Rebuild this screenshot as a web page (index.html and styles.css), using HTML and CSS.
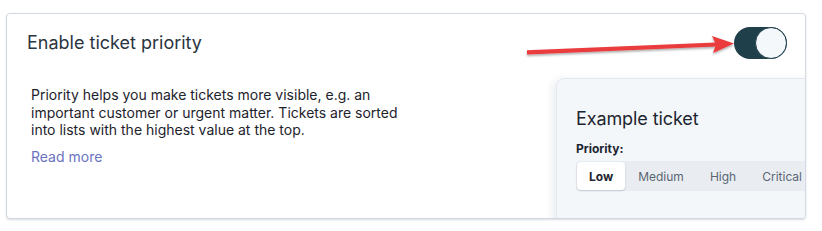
FILE: index.html
```html
<!DOCTYPE html>
<html lang="en">
<head>
<meta charset="utf-8">
<title>Enable ticket priority</title>
<link rel="stylesheet" href="styles.css">
</head>
<body>
<div class="page">
  <section class="card">
    <header class="card-head">
      <h2 class="title">Enable ticket priority</h2>
      <button class="toggle" aria-pressed="true"><span class="knob"></span></button>
    </header>
    <div class="card-body">
      <div class="desc">
        <p>Priority helps you make tickets more visible, e.g. an important customer or urgent matter. Tickets are sorted into lists with the highest value at the top.</p>
        <a class="more" href="#">Read more</a>
      </div>
      <div class="example">
        <h3 class="ex-title">Example ticket</h3>
        <div class="ex-label">Priority:</div>
        <div class="segment">
          <span class="seg active">Low</span>
          <span class="seg">Medium</span>
          <span class="seg">High</span>
          <span class="seg">Critical</span>
        </div>
      </div>
    </div>
  </section>
  <svg class="arrow" width="822" height="231" viewBox="0 0 822 231" aria-hidden="true">
    <defs>
      <filter id="sh" x="-10%" y="-50%" width="120%" height="200%">
        <feDropShadow dx="0" dy="1.5" stdDeviation="0.8" flood-color="#000" flood-opacity="0.35"/>
      </filter>
    </defs>
    <g filter="url(#sh)" fill="#ea3a3d" stroke="none">
      <polygon points="527,50.2 716,42.4 716,46.6 527,54.4"/>
      <polygon points="734,43.6 712,36 716,44.4 713,53"/>
    </g>
  </svg>
</div>
</body>
</html>
```
FILE: styles.css
```css
* { box-sizing: border-box; }
html, body { margin: 0; padding: 0; background: #fff; }
body {
  font-family: Inter, "Noto Sans", "Liberation Sans", sans-serif;
  color: #1d2530;
}
.page {
  position: relative;
  width: 822px;
  height: 231px;
  padding: 13px 16px 0 6px;
}
.card {
  width: 800px;
  height: 206px;
  border: 1px solid #d3d9e2;
  border-radius: 4px;
  box-shadow: 0 1px 2px rgba(40, 60, 90, 0.18);
  overflow: hidden;
  background: #fff;
}
.card-head {
  display: flex;
  align-items: center;
  justify-content: space-between;
  padding: 12px 18px 0 20px;
}
.title {
  margin: 0;
  font-size: 18px;
  font-weight: 400;
  line-height: 32px;
  color: #2b3540;
}
.toggle {
  position: relative;
  width: 53px;
  height: 32px;
  margin-top: 1px;
  padding: 0;
  border: none;
  border-radius: 16px;
  background: #1f3f4a;
  display: flex;
  justify-content: flex-end;
  align-items: center;
}
.knob {
  width: 32px;
  height: 32px;
  border-radius: 50%;
  background: #f5f8fb;
  border: 1.5px solid #1f3f4a;
}
.card-body {
  display: flex;
  align-items: flex-start;
  margin-top: 19px;
  padding-left: 24px;
}
.desc {
  width: 380px;
  padding-top: 8px;
}
.desc p {
  margin: 0;
  font-size: 14px;
  line-height: 17.5px;
  color: #1d232c;
}
.more {
  display: inline-block;
  margin-top: 9px;
  font-size: 14px;
  line-height: 17px;
  color: #6a73c2;
  text-decoration: none;
}
.example {
  flex-shrink: 0;
  width: 300px;
  height: 160px;
  margin-left: auto;
  margin-right: -51px;
  padding: 28px 0 0 19px;
  background: #f4f7fa;
  border: 1px solid #e3e8ee;
  border-radius: 8px;
  box-shadow: -3px 2px 8px rgba(40, 60, 90, 0.10);
}
.ex-title {
  margin: 0;
  font-size: 18px;
  font-weight: 400;
  line-height: 24px;
  color: #1d2530;
  letter-spacing: -0.1px;
}
.ex-label {
  margin-top: 10px;
  font-size: 12px;
  font-weight: 700;
  line-height: 16px;
  color: #1d2530;
}
.segment {
  display: flex;
  margin-top: 4px;
  padding: 1px;
  height: 30px;
  background: #e9edf2;
  border-radius: 4px;
}
.seg {
  display: flex;
  align-items: center;
  padding: 0 13px;
  height: 28px;
  font-size: 12px;
  color: #5a6573;
  white-space: nowrap;
}
.seg.active {
  background: #fff;
  border-radius: 4px;
  font-weight: 700;
  color: #1d2530;
  padding: 0 12px;
  box-shadow: 0 1px 2px rgba(30, 45, 70, 0.2);
}
.arrow {
  position: absolute;
  left: 0;
  top: 0;
  pointer-events: none;
}
```
